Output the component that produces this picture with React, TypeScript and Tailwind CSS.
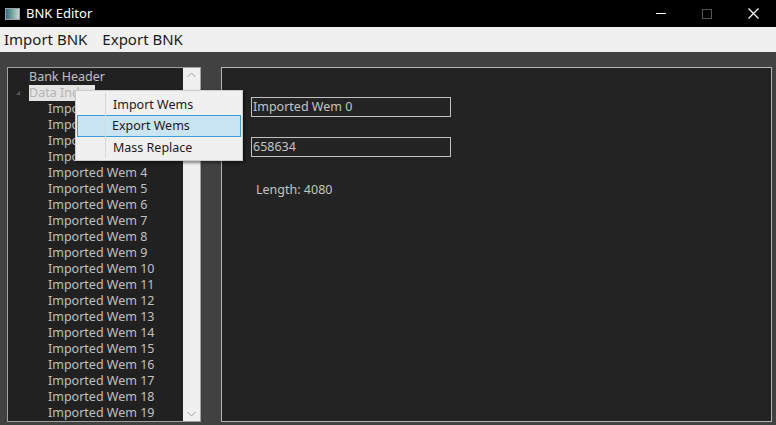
import React from 'react';

const font = { fontFamily: '"Noto Sans", "Open Sans", sans-serif' };

export default function App() {
  const wems = Array.from({ length: 20 }, (_, i) => `Imported Wem ${i}`);

  return (
    <div className="w-[776px] h-[425px] flex flex-col bg-[#414141] overflow-hidden select-none" style={font}>
      {/* Title bar */}
      <div className="h-[27px] bg-black flex items-center shrink-0">
        <div className="ml-[5px] w-[15px] h-[12px] border border-[#9aa0a6] bg-gradient-to-r from-[#2f6f8a] via-[#7aa8a0] to-[#c8d4d8]" />
        <span className="ml-[6px] text-[13px] text-white leading-none">BNK Editor</span>
        <div className="ml-auto flex items-center h-full">
          <div className="w-[46px] h-full flex items-center justify-center">
            <div className="w-[10px] h-px bg-white" />
          </div>
          <div className="w-[46px] h-full flex items-center justify-center">
            <div className="w-[10px] h-[10px] border border-[#555]" />
          </div>
          <div className="w-[46px] h-full flex items-center justify-center">
            <svg width="11" height="11" viewBox="0 0 11 11">
              <path d="M0.5 0.5 L10.5 10.5 M10.5 0.5 L0.5 10.5" stroke="white" strokeWidth="1.2" />
            </svg>
          </div>
        </div>
      </div>

      {/* Menu bar */}
      <div className="h-[25px] bg-[#f0f0f0] flex items-center gap-[15px] pl-[4px] text-[15px] text-[#1a1a1a] shrink-0">
        <span>Import BNK</span>
        <span>Export BNK</span>
      </div>

      {/* Body */}
      <div className="relative flex-1 flex gap-[20px] pt-[15px] pb-[8px] pl-[7px] pr-[4px]">
        {/* Tree */}
        <div className="w-[194px] border border-[#a0a0a0] bg-[#212121] flex">
          <div className="flex-1 overflow-hidden pt-[1px] text-[12.5px] text-[#c0c0c0] leading-[16px]">
            <div className="pl-[21px]">Bank Header</div>
            <div className="flex items-center">
              <svg width="21" height="16" viewBox="0 0 21 16">
                <path d="M12 6 L12 10 L8 10 Z" fill="#5a5a5a" />
              </svg>
              <span className="bg-[#e4e4e4] text-[#b4b4b4] pr-[2px]">Data Index</span>
            </div>
            {wems.map(w => (
              <div key={w} className="pl-[40px] whitespace-nowrap">{w}</div>
            ))}
          </div>
          <div className="w-[17px] bg-[#f0f0f0] flex flex-col justify-between items-center py-[4px]">
            <svg width="9" height="6" viewBox="0 0 9 6">
              <path d="M0.5 5 L4.5 1 L8.5 5" stroke="#a0a0a0" fill="none" />
            </svg>
            <svg width="9" height="6" viewBox="0 0 9 6">
              <path d="M0.5 1 L4.5 5 L8.5 1" stroke="#a0a0a0" fill="none" />
            </svg>
          </div>
        </div>

        {/* Details */}
        <div className="flex-1 border border-[#b4b4b4] bg-[#232323] pl-[29px] pt-[29px]">
          <div className="w-[200px] h-[20px] border border-[#c0c0c0] text-[12.5px] text-[#c4c4c4] leading-[18px] pl-[1px]">
            Imported Wem 0
          </div>
          <div className="mt-[20px] w-[200px] h-[20px] border border-[#c0c0c0] text-[12.5px] text-[#c4c4c4] leading-[18px] pl-[1px]">
            658634
          </div>
          <div className="mt-[25px] pl-[5px] text-[12.5px] text-[#c4c4c4] leading-[16px]">Length: 4080</div>
        </div>

        {/* Context menu */}
        <div className="absolute left-[75px] top-[38px] w-[168px] h-[71px] bg-[#f0f0f0] border border-[#cccccc] shadow-[2px_2px_3px_rgba(0,0,0,0.45)] py-[2px] text-[12.5px] text-[#1a1a1a]">
          <div className="absolute left-[29px] top-[2px] bottom-[2px] w-px bg-[#d7d7d7]" />
          <div className="h-[22px] flex items-center pl-[35px] pt-[2px] border border-transparent mx-[1px]">Import Wems</div>
          <div className="h-[22px] flex items-center pl-[34px] pt-[1px] bg-[#c9e4f2] border border-[#3aa0d4] mx-[1px]">Export Wems</div>
          <div className="h-[22px] flex items-center pl-[35px] pt-[1px] border border-transparent mx-[1px]">Mass Replace</div>
        </div>
      </div>
    </div>
  );
}
